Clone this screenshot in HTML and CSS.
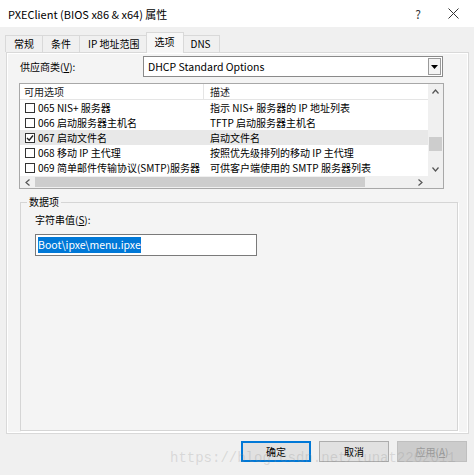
FILE: index.html
```html
<!DOCTYPE html>
<html lang="zh">
<head>
<meta charset="utf-8">
<link rel="stylesheet" href="styles.css">
</head>
<body>
<div class="window">
  <div class="titlebar">
    <span class="title">PXEClient (BIOS x86 &amp; x64) 属性</span>
    <span class="help">?</span>
    <span class="close"><svg width="11" height="11" viewBox="0 0 11 11"><path d="M0.5 0.5 L10.5 10.5 M10.5 0.5 L0.5 10.5" stroke="#333" stroke-width="1" fill="none"/></svg></span>
  </div>
  <div class="main">
    <div class="tabs">
      <div class="tab">常规</div>
      <div class="tab">条件</div>
      <div class="tab">IP 地址范围</div>
      <div class="tab active">选项</div>
      <div class="tab">DNS</div>
    </div>
    <div class="panel">
      <div class="vendor-row">
        <span class="vendor-label">供应商类(<u>V</u>):</span>
        <div class="combo">
          <span class="combo-text">DHCP Standard Options</span>
          <span class="combo-btn"><svg width="7" height="4" viewBox="0 0 7 4"><path d="M0 0 H7 L3.5 4 Z" fill="#000"/></svg></span>
        </div>
      </div>
      <div class="listview">
        <div class="lv-main">
          <div class="lv-header">
            <div class="col1">可用选项</div>
            <div class="col2">描述</div>
          </div>
          <div class="lv-row">
            <div class="col1"><span class="chk"></span>065 NIS+ 服务器</div>
            <div class="col2">指示 NIS+ 服务器的 IP 地址列表</div>
          </div>
          <div class="lv-row">
            <div class="col1"><span class="chk"></span>066 启动服务器主机名</div>
            <div class="col2">TFTP 启动服务器主机名</div>
          </div>
          <div class="lv-row selected">
            <div class="col1"><span class="chk checked"><svg width="8" height="8" viewBox="0 0 8 8"><path d="M1 4 L3.2 6.2 L7 1.5" stroke="#222" stroke-width="1.4" fill="none"/></svg></span>067 启动文件名</div>
            <div class="col2">启动文件名</div>
          </div>
          <div class="lv-row">
            <div class="col1"><span class="chk"></span>068 移动 IP 主代理</div>
            <div class="col2">按照优先级排列的移动 IP 主代理</div>
          </div>
          <div class="lv-row">
            <div class="col1"><span class="chk"></span>069 简单邮件传输协议(SMTP)服务器</div>
            <div class="col2">可供客户端使用的 SMTP 服务器列表</div>
          </div>
        </div>
        <div class="vscroll">
          <span class="arrow"><svg width="7" height="5" viewBox="0 0 7 5"><path d="M0.5 4.5 L3.5 1 L6.5 4.5" stroke="#555" stroke-width="1.2" fill="none"/></svg></span>
          <span class="vtrack"><span class="vthumb"></span></span>
          <span class="arrow"><svg width="7" height="5" viewBox="0 0 7 5"><path d="M0.5 0.5 L3.5 4 L6.5 0.5" stroke="#555" stroke-width="1.2" fill="none"/></svg></span>
        </div>
        <div class="hscroll">
          <span class="harrow"><svg width="5" height="7" viewBox="0 0 5 7"><path d="M4.5 0.5 L1 3.5 L4.5 6.5" stroke="#555" stroke-width="1.2" fill="none"/></svg></span>
          <span class="htrack"><span class="hthumb"></span></span>
          <span class="harrow"><svg width="5" height="7" viewBox="0 0 5 7"><path d="M0.5 0.5 L4 3.5 L0.5 6.5" stroke="#555" stroke-width="1.2" fill="none"/></svg></span>
        </div>
        <div class="corner"></div>
      </div>
      <div class="group">
        <span class="group-title">数据项</span>
        <div class="field-label">字符串值(<u>S</u>):</div>
        <div class="textbox"><span class="sel">Boot\ipxe\menu.ipxe</span></div>
      </div>
    </div>
    <div class="buttons">
      <div class="btn default">确定</div>
      <div class="btn">取消</div>
      <div class="btn disabled">应用(<u>A</u>)</div>
    </div>
  </div>
  <div class="watermark">https://blog.csdn.net/lunat2202011</div>
</div>
</body>
</html>
```
FILE: styles.css
```css
* { box-sizing: border-box; }
html, body { margin: 0; padding: 0; }
body {
  background: #f0f0f0;
  font-family: "Noto Sans CJK SC", "Noto Sans", sans-serif;
  font-size: 10px;
  color: #000;
  width: 474px;
  height: 475px;
  overflow: hidden;
}
.window { position: relative; width: 474px; height: 475px; }
.titlebar {
  height: 27px;
  background: #fff;
  display: flex;
  align-items: center;
  padding-left: 8px;
  line-height: 16px;
  font-size: 11px;
}
.title { flex: 1; }
.help { width: 14px; margin-right: 23px; text-align: center; color: #333; font-size: 12px; }
.close { width: 11px; height: 11px; margin-right: 15px; display: flex; }
.main { padding: 5px 0 0 6px; }
.tabs {
  display: flex;
  align-items: flex-end;
  height: 20px;
  margin-left: -1px;
  position: relative;
  z-index: 2;
}
.tab {
  height: 17px;
  line-height: 16px;
  padding: 0 8px;
  border: 1px solid #d9d9d9;
  border-bottom: none;
  margin-right: -1px;
  background: #f0f0f0;
}
.tab.active {
  height: 21px;
  margin: 0 -2px -1px -2px;
  padding: 1px 8px 0 8px;
  background: #f7f7f7;
  position: relative;
  z-index: 3;
}
.panel {
  width: 463px;
  height: 382px;
  border: 1px solid #d9d9d9;
  box-shadow: inset 1px 1px 0 #fff, inset -1px -1px 0 #fff;
  background: #f4f4f4;
  display: flex;
  flex-direction: column;
}
.vendor-row {
  display: flex;
  align-items: center;
  margin-top: 3px;
  padding-left: 13px;
}
.vendor-label { width: 123px; line-height: 16px; }
.combo {
  width: 300px;
  height: 21px;
  border: 1px solid #8a8a8a;
  background: #fff;
  display: flex;
  align-items: center;
  padding-left: 4px;
}
.combo-text { flex: 1; line-height: 16px; font-size: 10.5px; }
.combo-btn {
  width: 13px;
  height: 17px;
  margin-right: 1px;
  border: 1px solid #9a9a9a;
  background: #f4f4f4;
  display: flex;
  align-items: center;
  justify-content: center;
}
.listview {
  margin: 6px 0 0 12px;
  width: 425px;
  height: 106px;
  border: 1px solid #a8a8a8;
  background: #fff;
  display: grid;
  grid-template-columns: 1fr 15px;
  grid-template-rows: 1fr 12px;
}
.lv-main { overflow: hidden; }
.lv-header {
  display: flex;
  height: 16px;
  line-height: 15px;
  border-bottom: 1px solid #e5e5e5;
  color: #222;
}
.lv-header .col1 { border-right: 1px solid #e5e5e5; padding-left: 4px; }
.col1 { width: 184px; flex: none; white-space: nowrap; display: flex; align-items: center; overflow: hidden; }
.col2 { padding-left: 6px; white-space: nowrap; }
.lv-row {
  display: flex;
  height: 15px;
  line-height: 15px;
}
.lv-row .col1 { padding-left: 5px; }
.lv-row.selected { background: #e8e8e8; }
.chk {
  width: 10px;
  height: 10px;
  border: 1px solid #333;
  background: #fff;
  margin-right: 3px;
  display: flex;
  align-items: center;
  justify-content: center;
  flex: none;
}
.vscroll {
  background: #f0f0f0;
  display: flex;
  flex-direction: column;
  align-items: center;
}
.arrow { height: 14px; display: flex; align-items: center; justify-content: center; }
.vtrack { flex: 1; width: 100%; display: flex; flex-direction: column; }
.vthumb { width: 13px; height: 14px; margin: 39px auto 0; background: #cdcdcd; }
.hscroll {
  background: #f0f0f0;
  display: flex;
  align-items: center;
}
.harrow { width: 15px; display: flex; align-items: center; justify-content: center; height: 12px; }
.htrack { flex: 1; height: 12px; display: flex; align-items: center; }
.hthumb { width: 330px; height: 10px; background: #cdcdcd; }
.corner { background: #f0f0f0; }
.group {
  position: relative;
  margin: 13px 0 0 13px;
  width: 438px;
  height: 229px;
  border: 1px solid #d5d5d5;
  box-shadow: 1px 1px 0 #fff;
  padding: 9px 0 0 14px;
}
.group-title {
  position: absolute;
  left: 6px;
  top: -9px;
  padding: 0 2px;
  line-height: 16px;
  background: #f4f4f4;
}
.field-label { line-height: 16px; }
.textbox {
  margin-top: 6px;
  width: 222px;
  height: 22px;
  border: 1px solid #7a7a7a;
  background: #fff;
  padding: 2px 0 0 2px;
  display: flex;
}
.sel {
  background: #0078d7;
  color: #fff;
  line-height: 16px;
  height: 16px;
  font-size: 10.5px;
}
.buttons {
  display: flex;
  justify-content: flex-end;
  gap: 8px;
  margin-top: 7px;
  padding-right: 7px;
}
.btn {
  width: 70px;
  height: 21px;
  border: 1px solid #adadad;
  background: #e1e1e1;
  text-align: center;
  line-height: 19px;
}
.btn.default { border: 2px solid #0078d7; line-height: 17px; }
.btn.disabled { background: #cccccc; border-color: #bfbfbf; color: #9a9a9a; }
.watermark {
  position: absolute;
  left: 170px;
  top: 449px;
  font-family: "Liberation Mono", monospace;
  font-size: 14px;
  line-height: 18px;
  color: rgba(140, 140, 140, 0.25);
  white-space: nowrap;
  pointer-events: none;
}
```
